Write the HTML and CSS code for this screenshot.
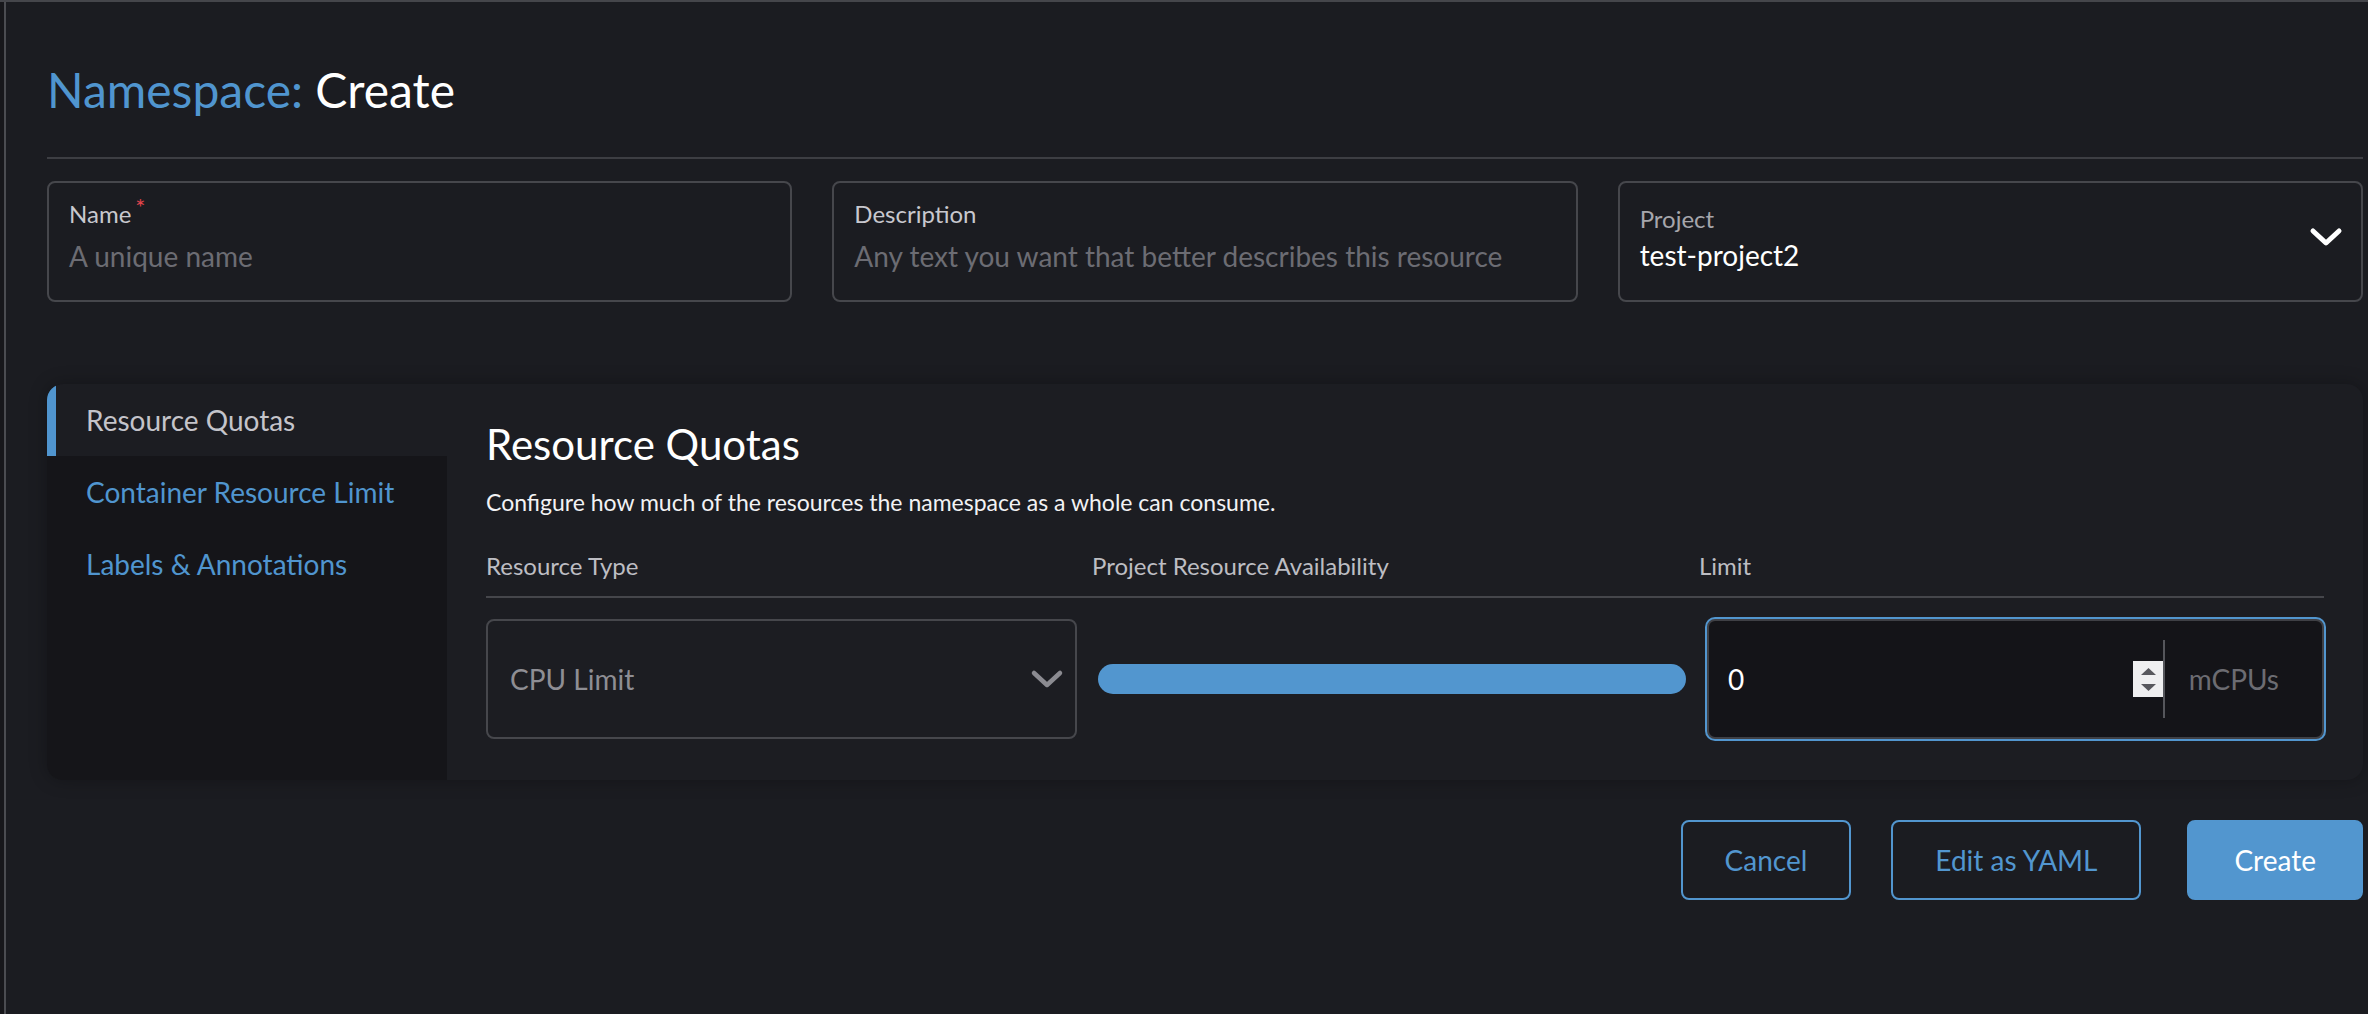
FILE: index.html
```html
<!DOCTYPE html>
<html lang="en">
<head>
<meta charset="utf-8">
<title>Namespace: Create</title>
<link rel="stylesheet" href="styles.css">
</head>
<body>
<div class="frame">
  <div class="strip"></div>
  <main class="page">
    <header class="title-bar">
      <h1><span class="crumb">Namespace:</span> Create</h1>
    </header>

    <div class="fields">
      <div class="field">
        <div class="field-label">Name<span class="req">*</span></div>
        <div class="field-input placeholder">A unique name</div>
      </div>
      <div class="field">
        <div class="field-label">Description</div>
        <div class="field-input placeholder">Any text you want that better describes this resource</div>
      </div>
      <div class="field field-select">
        <div class="select-text">
          <div class="field-label dim">Project</div>
          <div class="field-input value">test-project2</div>
        </div>
        <svg class="chev chev-white" width="34" height="21" viewBox="0 0 34 21"><polyline points="4,4 17,16 30,4" fill="none" stroke="#ffffff" stroke-width="5" stroke-linecap="round" stroke-linejoin="round"/></svg>
      </div>
    </div>

    <section class="tabbed">
      <nav class="side-tabs">
        <ul>
          <li class="tab active">Resource Quotas</li>
          <li class="tab">Container Resource Limit</li>
          <li class="tab">Labels &amp; Annotations</li>
        </ul>
      </nav>
      <div class="tab-body">
        <h2>Resource Quotas</h2>
        <p class="desc">Configure how much of the resources the namespace as a whole can consume.</p>
        <div class="quota-head">
          <div>Resource Type</div>
          <div>Project Resource Availability</div>
          <div>Limit</div>
        </div>
        <div class="quota-row">
          <div class="cell cell-type">
            <div class="select-box">
              <span>CPU Limit</span>
              <svg class="chev" width="34" height="21" viewBox="0 0 34 21"><polyline points="4,4 17,16 30,4" fill="none" stroke="#8b8b91" stroke-width="4.5" stroke-linecap="round" stroke-linejoin="round"/></svg>
            </div>
          </div>
          <div class="cell cell-bar">
            <div class="bar"></div>
          </div>
          <div class="cell cell-limit">
            <div class="limit-input">
              <span class="limit-value">0</span>
              <svg class="spinner" width="30" height="36" viewBox="0 0 30 36"><rect width="30" height="36" fill="#efeff0"/><polygon points="8,14 15.5,7 23,14" fill="#58585d"/><polygon points="8,23 15.5,30 23,23" fill="#58585d"/></svg>
              <span class="addon">mCPUs</span>
            </div>
          </div>
        </div>
      </div>
    </section>

    <div class="actions">
      <button class="btn btn-cancel">Cancel</button>
      <button class="btn btn-yaml">Edit as YAML</button>
      <button class="btn btn-primary">Create</button>
    </div>
  </main>
</div>
</body>
</html>
```

FILE: styles.css
```css
* { box-sizing: border-box; }

html, body {
  margin: 0;
  background: #1b1c21;
  font-family: Lato, "Open Sans", "Noto Sans", sans-serif;
  color: #e8e8ea;
}

.frame {
  display: flex;
  min-height: 1014px;
  border-top: 2px solid #45464b;
}

.strip {
  width: 4px;
  background: #17171b;
}

.page {
  flex: 1;
  border-left: 2px solid #4b4c51;
  padding: 59px 5px 0 41px;
}

/* Title */
.title-bar {
  padding-bottom: 38px;
  border-bottom: 2px solid #3d3e43;
}

h1 {
  margin: 0;
  font-size: 48px;
  line-height: 58px;
  font-weight: 400;
  color: #ffffff;
}

.crumb { color: #5095cf; }

/* Top fields */
.fields {
  display: grid;
  grid-template-columns: repeat(3, 1fr);
  gap: 40px;
  margin-top: 22px;
}

.field {
  height: 121px;
  border: 2px solid #46474c;
  border-radius: 8px;
  padding: 16px 19px 0 20px;
}

.field-label {
  font-size: 24px;
  line-height: 29px;
  color: #c8c8ce;
}

.field-label.dim { color: #a6a6ac; }

.req {
  color: #e2444c;
  font-size: 24px;
  line-height: 24px;
  vertical-align: top;
  margin-left: 4px;
  position: relative;
  top: -4px;
}

.field-input {
  margin-top: 11px;
  font-size: 28px;
  line-height: 34px;
  white-space: nowrap;
}

.placeholder { color: #6c6c73; }

.field-select {
  display: flex;
  justify-content: space-between;
  align-items: flex-start;
  padding-top: 21px;
  padding-right: 18px;
}

.field-select .field-input { margin-top: 5px; }

.value { color: #ffffff; }

.chev-white { margin-top: 23px; }

/* Tabbed area */
.tabbed {
  display: flex;
  margin-top: 82px;
  background: #1c1d22;
  border-radius: 16px;
  overflow: hidden;
  box-shadow: 0 0 18px rgba(0, 0, 0, 0.28);
}

.side-tabs {
  width: 400px;
  flex: none;
  background: #151519;
}

.side-tabs ul {
  list-style: none;
  margin: 0;
  padding: 0;
}

.tab {
  font-size: 28px;
  line-height: 34px;
  padding: 19px 20px 19px 39px;
  color: #5095cf;
  white-space: nowrap;
}

.tab.active {
  background: #1c1d22;
  color: #c4c4ca;
  border-left: 9px solid #5095cf;
  padding-left: 30px;
}

.tab-body {
  flex: 1;
  padding: 35px 39px 41px;
}

h2 {
  margin: 0;
  font-size: 42px;
  line-height: 50px;
  font-weight: 400;
  color: #ffffff;
}

.desc {
  margin: 16px 0 0;
  font-size: 23px;
  line-height: 34px;
  color: #f2f2f4;
}

.quota-head,
.quota-row {
  display: grid;
  grid-template-columns: 606px 607px 1fr;
}

.quota-head {
  margin-top: 30px;
  padding-bottom: 13px;
  border-bottom: 2px solid #45464b;
  font-size: 24px;
  line-height: 34px;
  color: #bdbdc3;
}

.quota-row {
  margin-top: 21px;
  align-items: center;
}

.cell-type { padding-right: 15px; }

.select-box {
  height: 120px;
  border: 2px solid #46474c;
  border-radius: 8px;
  display: flex;
  align-items: center;
  justify-content: space-between;
  padding: 0 11px 0 22px;
  font-size: 28px;
  color: #8e8e94;
}

.cell-bar { padding: 0 13px 0 6px; }

.bar {
  height: 30px;
  border-radius: 15px;
  background: #5296cf;
}

.cell-limit { padding-left: 8px; }

.limit-input {
  height: 120px;
  background: #141418;
  border: 2px solid #3f4045;
  border-radius: 8px;
  box-shadow: 0 0 0 2px #5296cf;
  display: flex;
  align-items: center;
  padding-left: 19px;
  font-size: 28px;
}

.limit-value {
  flex: 1;
  color: #ffffff;
}

.spinner { flex: none; }

.addon {
  height: 78px;
  display: flex;
  align-items: center;
  border-left: 2px solid #55565b;
  padding: 0 43px 0 24px;
  color: #6c6c72;
}

/* Buttons */
.actions {
  display: flex;
  justify-content: flex-end;
  gap: 40px;
  margin-top: 40px;
}

.btn {
  height: 80px;
  border: 2px solid #5296cf;
  border-radius: 8px;
  background: transparent;
  color: #5296cf;
  font-family: Lato, "Open Sans", sans-serif;
  font-size: 28px;
  padding: 0 40px;
  cursor: pointer;
}

.btn-cancel { padding: 0 42px; }

.btn-yaml { padding: 0 42px; }

.btn-primary {
  background: #5296cf;
  color: #ffffff;
  padding: 0 45px;
  margin-left: 6px;
}
```
